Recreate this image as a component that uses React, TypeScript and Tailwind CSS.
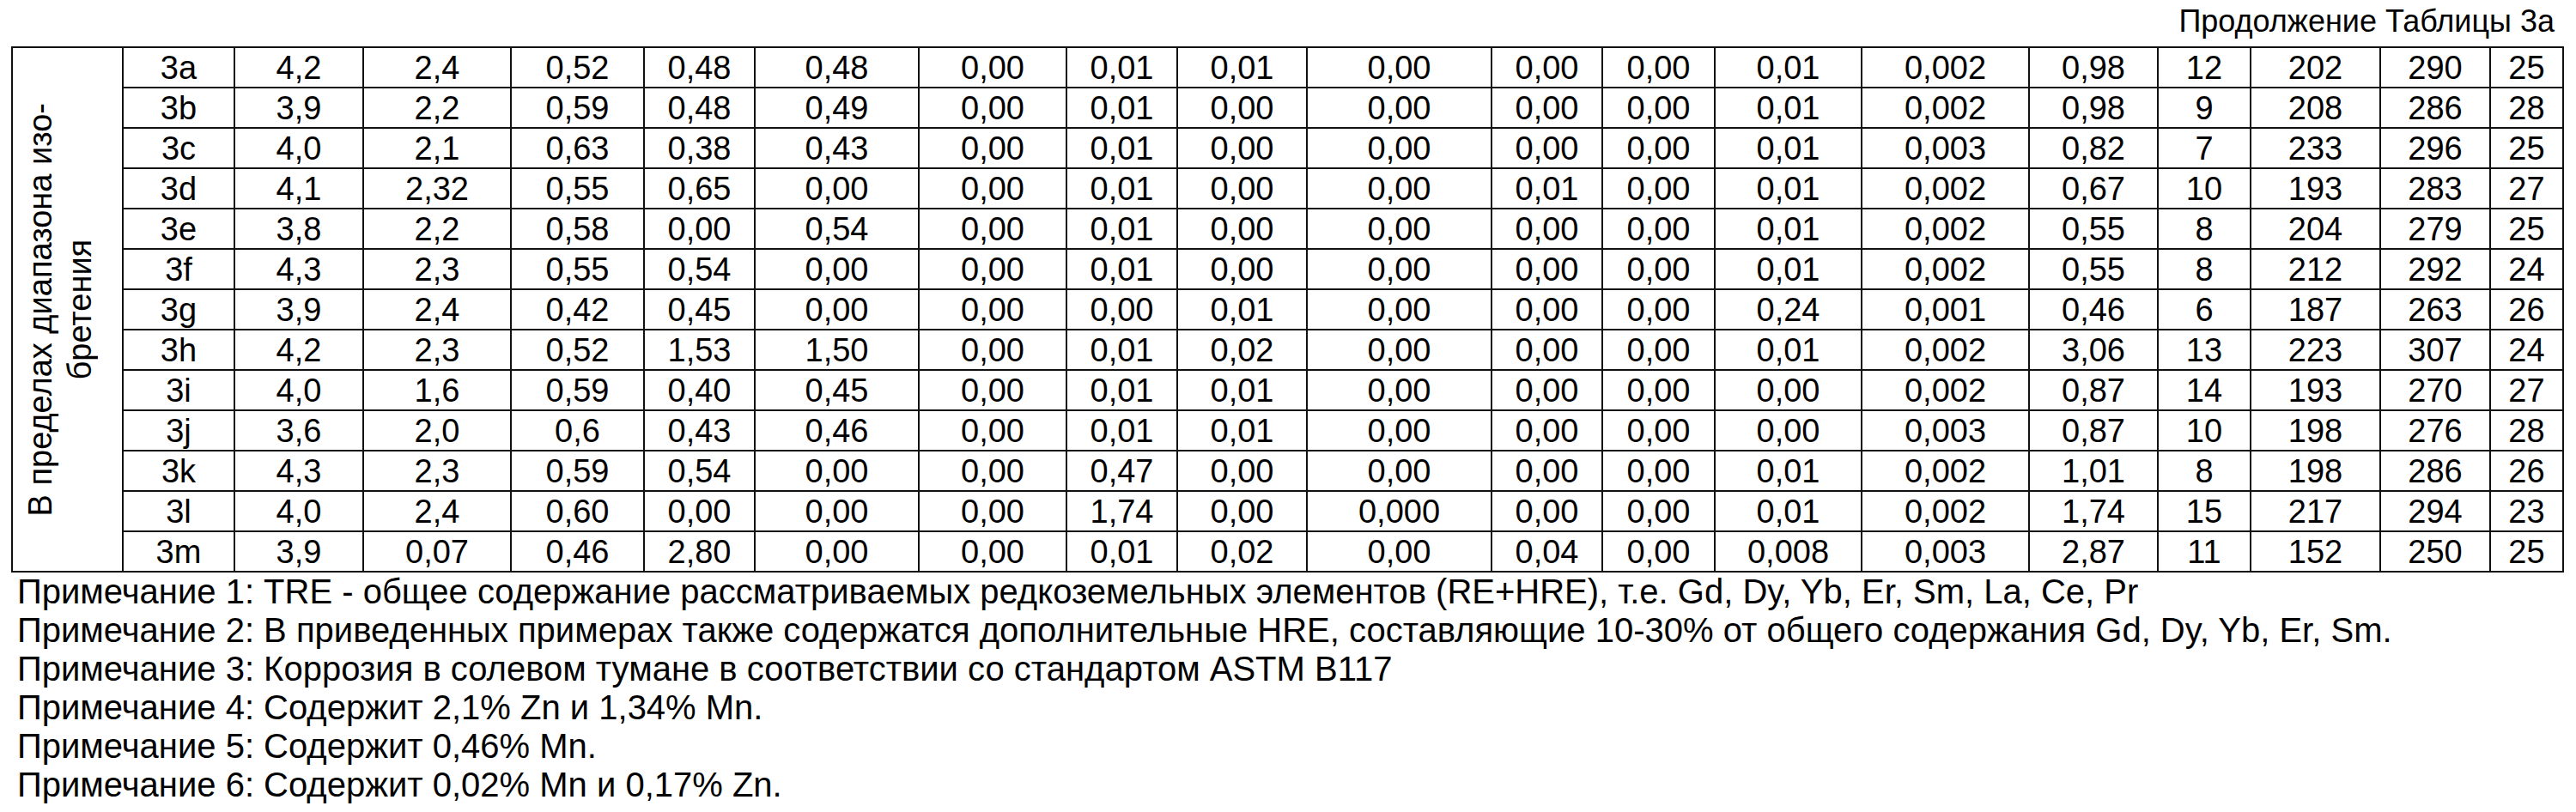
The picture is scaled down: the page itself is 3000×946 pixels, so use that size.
const COLS = [129, 130, 150, 172, 155, 129, 191, 172, 129, 151, 215, 129, 131, 171, 195, 150, 108, 151, 128, 85];

const ROWS: string[][] = [
  ["3a", "4,2", "2,4", "0,52", "0,48", "0,48", "0,00", "0,01", "0,01", "0,00", "0,00", "0,00", "0,01", "0,002", "0,98", "12", "202", "290", "25"],
  ["3b", "3,9", "2,2", "0,59", "0,48", "0,49", "0,00", "0,01", "0,00", "0,00", "0,00", "0,00", "0,01", "0,002", "0,98", "9", "208", "286", "28"],
  ["3c", "4,0", "2,1", "0,63", "0,38", "0,43", "0,00", "0,01", "0,00", "0,00", "0,00", "0,00", "0,01", "0,003", "0,82", "7", "233", "296", "25"],
  ["3d", "4,1", "2,32", "0,55", "0,65", "0,00", "0,00", "0,01", "0,00", "0,00", "0,01", "0,00", "0,01", "0,002", "0,67", "10", "193", "283", "27"],
  ["3e", "3,8", "2,2", "0,58", "0,00", "0,54", "0,00", "0,01", "0,00", "0,00", "0,00", "0,00", "0,01", "0,002", "0,55", "8", "204", "279", "25"],
  ["3f", "4,3", "2,3", "0,55", "0,54", "0,00", "0,00", "0,01", "0,00", "0,00", "0,00", "0,00", "0,01", "0,002", "0,55", "8", "212", "292", "24"],
  ["3g", "3,9", "2,4", "0,42", "0,45", "0,00", "0,00", "0,00", "0,01", "0,00", "0,00", "0,00", "0,24", "0,001", "0,46", "6", "187", "263", "26"],
  ["3h", "4,2", "2,3", "0,52", "1,53", "1,50", "0,00", "0,01", "0,02", "0,00", "0,00", "0,00", "0,01", "0,002", "3,06", "13", "223", "307", "24"],
  ["3i", "4,0", "1,6", "0,59", "0,40", "0,45", "0,00", "0,01", "0,01", "0,00", "0,00", "0,00", "0,00", "0,002", "0,87", "14", "193", "270", "27"],
  ["3j", "3,6", "2,0", "0,6", "0,43", "0,46", "0,00", "0,01", "0,01", "0,00", "0,00", "0,00", "0,00", "0,003", "0,87", "10", "198", "276", "28"],
  ["3k", "4,3", "2,3", "0,59", "0,54", "0,00", "0,00", "0,47", "0,00", "0,00", "0,00", "0,00", "0,01", "0,002", "1,01", "8", "198", "286", "26"],
  ["3l", "4,0", "2,4", "0,60", "0,00", "0,00", "0,00", "1,74", "0,00", "0,000", "0,00", "0,00", "0,01", "0,002", "1,74", "15", "217", "294", "23"],
  ["3m", "3,9", "0,07", "0,46", "2,80", "0,00", "0,00", "0,01", "0,02", "0,00", "0,04", "0,00", "0,008", "0,003", "2,87", "11", "152", "250", "25"],
];

const NOTES = [
  "Примечание 1: TRE - общее содержание рассматриваемых редкоземельных элементов (RE+HRE), т.е. Gd, Dy, Yb, Er, Sm, La, Ce, Pr",
  "Примечание 2: В приведенных примерах также содержатся дополнительные HRE, составляющие 10-30% от общего содержания Gd, Dy, Yb, Er, Sm.",
  "Примечание 3: Коррозия в солевом тумане в соответствии со стандартом ASTM B117",
  "Примечание 4: Содержит 2,1% Zn и 1,34% Mn.",
  "Примечание 5: Содержит 0,46% Mn.",
  "Примечание 6: Содержит 0,02% Mn и 0,17% Zn.",
];

export default function App() {
  return (
    <div className="w-[3000px] h-[946px] bg-white text-black overflow-hidden font-['Liberation_Sans',Arial,sans-serif]">
      {/* caption */}
      <div className="h-[54px] pr-[25px] text-right text-[36px] leading-[50px]">Продолжение Таблицы 3а</div>

      <table className="ml-[13px] w-[2973px] table-fixed border-collapse border-2 border-[#111] text-[38px] leading-none">
        <colgroup>
          {COLS.map((w, i) => (
            <col key={i} style={{ width: w }} />
          ))}
        </colgroup>
        <tbody>
          {ROWS.map((row, r) => (
            <tr key={r} className="h-[47px]">
              {r === 0 && (
                <td rowSpan={ROWS.length} className="border-2 border-[#111] p-0 align-middle">
                  <div className="flex justify-center pr-[18px]">
                    <div className="[writing-mode:vertical-rl] rotate-180 text-center leading-[46px]">
                      В пределах диапазона изо-
                      <br />
                      бретения
                    </div>
                  </div>
                </td>
              )}
              {row.map((v, c) => (
                <td key={c} className="border-2 border-[#111] p-0 text-center align-middle">
                  {v}
                </td>
              ))}
            </tr>
          ))}
        </tbody>
      </table>

      {/* notes */}
      <div className="pl-[20px] text-[40px] leading-[45px]">
        {NOTES.map((n, i) => (
          <div key={i} className="whitespace-nowrap">{n}</div>
        ))}
      </div>
    </div>
  );
}
